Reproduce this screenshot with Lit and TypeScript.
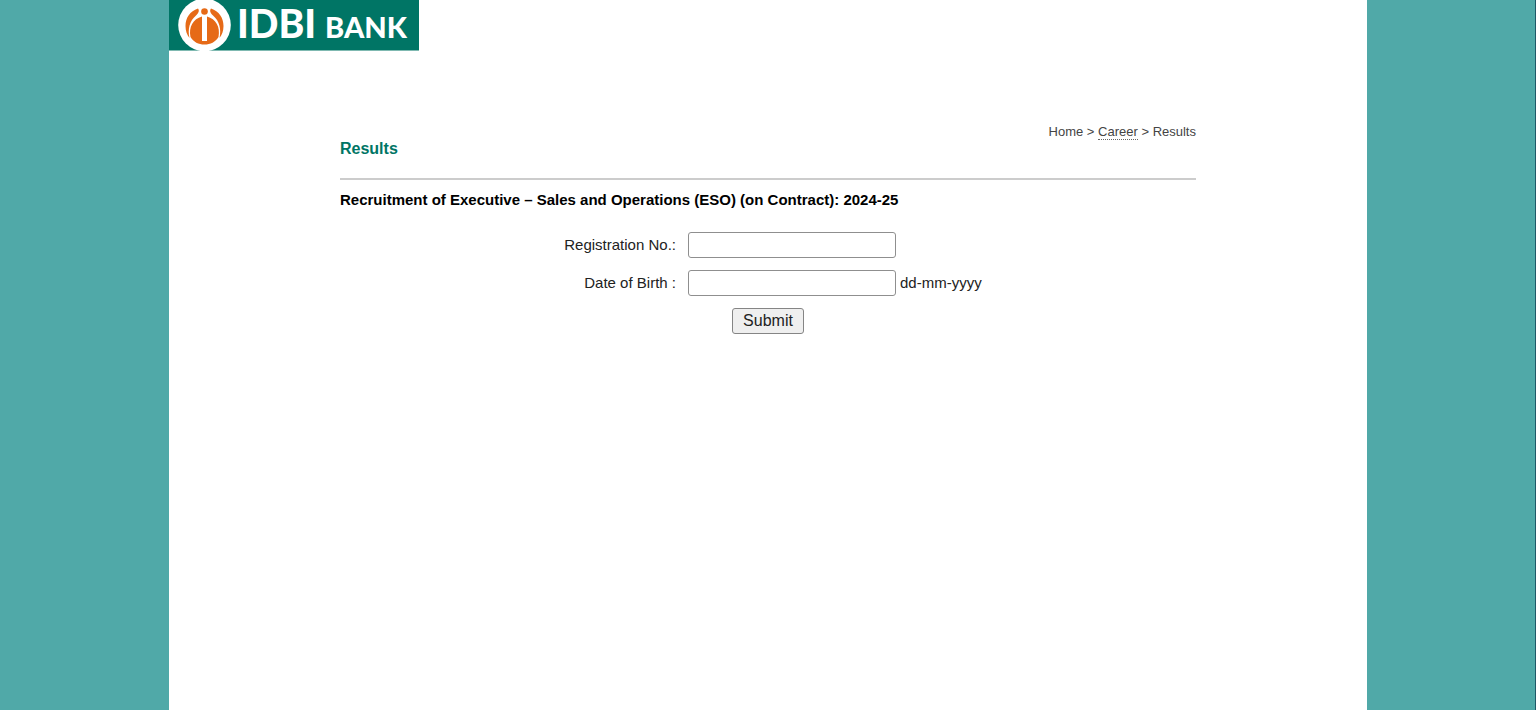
import { LitElement, html, css } from "lit";
import { customElement } from "lit/decorators.js";

@customElement("bank-logo")
class BankLogo extends LitElement {
  static styles = css`
    :host { display: block; width: 250px; }
    .logo { display: block; }
    .word { font-family: Lato, "Open Sans", sans-serif; font-weight: 900; fill: #fff; }
  `;
  render() {
    return html`
      <svg class="logo" width="250" height="51" viewBox="0 0 250 51" role="img" aria-label="IDBI Bank">
        <rect width="250" height="50.500" fill="#007565" />
        <circle cx="35.5" cy="25" r="26.3" fill="#fff" />
        <path d="M29 8.500C21 11 16.500 18 16.500 26C16.500 31 18 35 20.500 38C18.500 29 20.500 21 27 15.500C30 13 30.500 10 29 8.500Z" fill="#e66a17" />
        <path d="M42 8.500C50 11 54.500 18 54.500 26C54.500 31 53 35 50.500 38C52.500 29 50.500 21 44 15.500C41 13 40.500 10 42 8.500Z" fill="#e66a17" />
        <path d="M33 16.500C24 19 19.500 27 21.500 37C24.500 42 29.500 44.500 35.500 44.500C41.500 44.500 46.500 42 49.500 37C51.500 27 47 19 38 16.500V41H33Z" fill="#e66a17" />
        <circle cx="35.5" cy="11.500" r="3.300" fill="#e66a17" />
        <text class="word" x="68" y="38" font-size="39">IDBI</text>
        <text class="word" x="156" y="38" font-size="29">BANK</text>
      </svg>`;
  }
}

@customElement("app-root")
class AppRoot extends LitElement {
  static styles = css`
    :host {
      display: block;
      min-height: 100vh;
      background: #50a9a8;
      box-shadow: inset -1px 0 #1f5866;
      font-family: "Liberation Sans", Arial, sans-serif;
      font-size: 15px;
      line-height: 18px;
      color: #222;
    }
    .page {
      width: 78%;
      min-height: 100vh;
      margin: 0 auto;
      background: #fff;
    }
    .content {
      max-width: 856px;
      margin: 0 auto;
      padding-top: 71px;
    }
    .head {
      display: flex;
      justify-content: space-between;
      align-items: flex-start;
      padding-bottom: 20px;
      border-bottom: 2px solid #ccc;
    }
    .title {
      margin: 0;
      padding-top: 18px;
      font-size: 16px;
      color: #007565;
    }
    .crumbs { font-size: 13px; line-height: 20px; color: #444; }
    .crumbs a { color: inherit; text-decoration: none; }
    .crumbs .current { border-bottom: 1px dotted #666; }
    .subject {
      margin: 11px 0 23px;
      font-size: 15px;
      line-height: 18px;
      color: #000;
    }
    .form { display: grid; gap: 12px; }
    .row {
      display: grid;
      grid-template-columns: 336px 1fr;
      column-gap: 12px;
      align-items: center;
    }
    .label { text-align: right; }
    .field { display: flex; align-items: center; gap: 4px; }
    .input {
      box-sizing: border-box;
      width: 208px;
      height: 26px;
      border: 1px solid #8f8f8f;
      border-radius: 3px;
      padding: 1px 4px;
      font: inherit;
      background: #fff;
    }
    .submit {
      justify-self: center;
      height: 26px;
      padding: 0 10px;
      border: 1px solid #858585;
      border-radius: 3px;
      background: #efefef;
      font-family: inherit;
      font-size: 16px;
      color: #222;
    }
  `;
  render() {
    return html`
      <div class="page">
        <bank-logo></bank-logo>
        <main class="content">
          <header class="head">
            <h1 class="title">Results</h1>
            <nav class="crumbs" aria-label="Breadcrumb"><a href="#home">Home</a> &gt; <a class="current" href="#career">Career</a> &gt; Results</nav>
          </header>
          <h2 class="subject">Recruitment of Executive – Sales and Operations (ESO) (on Contract): 2024-25</h2>
          <form class="form" @submit=${(e: Event) => e.preventDefault()}>
            <div class="row">
              <label class="label" for="reg">Registration No.:</label>
              <div class="field"><input class="input" id="reg" type="text" /></div>
            </div>
            <div class="row">
              <label class="label" for="dob">Date of Birth :</label>
              <div class="field"><input class="input" id="dob" type="text" aria-describedby="fmt" /><span id="fmt">dd-mm-yyyy</span></div>
            </div>
            <button class="submit" type="submit">Submit</button>
          </form>
        </main>
      </div>`;
  }
}
